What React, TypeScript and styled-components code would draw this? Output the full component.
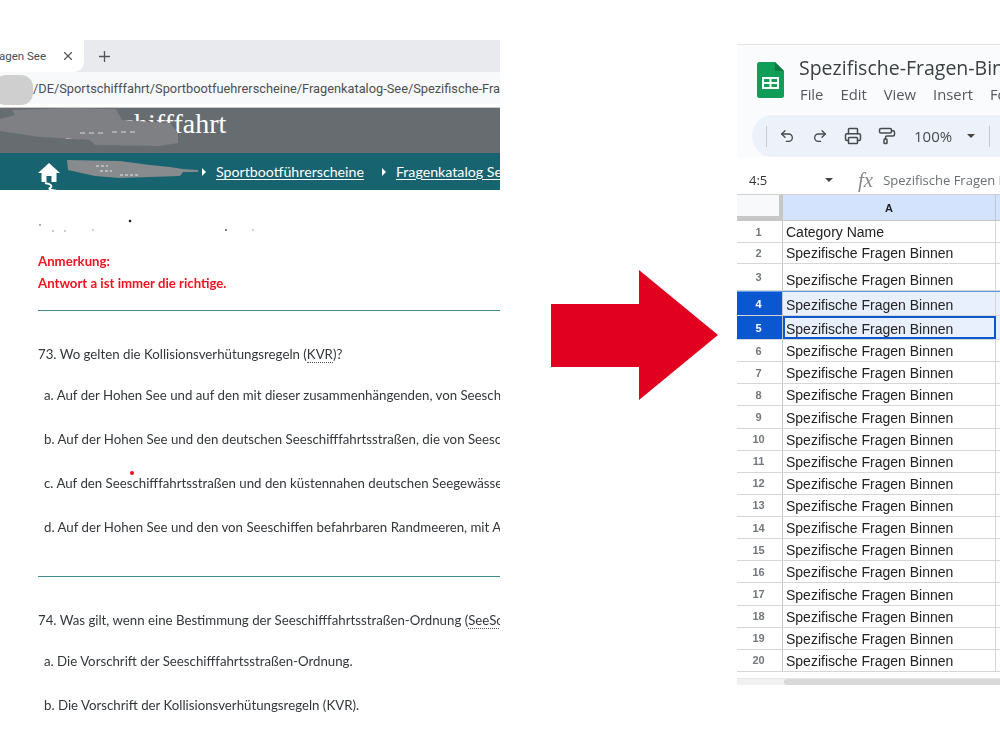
import React from "react";
import styled, { createGlobalStyle } from "styled-components";
import { Undo2, Redo2, Printer, PaintRoller, X, Plus } from "lucide-react";

const GlobalStyle = createGlobalStyle`
  html, body { margin: 0; padding: 0; background: #fff; }
  body { font-family: "Liberation Sans", Arial, sans-serif; }
`;

const Page = styled.div`
  width: 1000px;
  height: 750px;
  overflow: hidden;
  display: grid;
  grid-template-columns: 500px 237px 263px;
  background: #fff;
`;

/* ---------- left: browser with the question catalogue ---------- */

const Browser = styled.div`
  position: relative;
  margin-top: 40px;
  height: 710px;
  overflow: hidden;
  font-family: "Lato", sans-serif;
  filter: blur(0.3px);
`;

const TabStrip = styled.div`
  height: 32px;
  background: #e8eaed;
  display: flex;
  align-items: center;
`;

const Tab = styled.div`
  width: 84px;
  height: 32px;
  flex: none;
  box-sizing: border-box;
  background: #fff;
  border-radius: 0 0 10px 0;
  display: flex;
  align-items: center;
  justify-content: flex-end;
  gap: 15px;
  padding-right: 9px;
  overflow: hidden;
  font-family: "Roboto", sans-serif;
  font-size: 11.5px;
  color: #4a4d52;
  white-space: nowrap;
`;

const TabClose = styled.span`
  display: flex;
  flex: none;
  width: 14px;
  justify-content: center;
`;

const NewTab = styled.div`
  margin-left: 12px;
  display: flex;
  color: #4f5357;
`;

const AddressBar = styled.div`
  height: 35px;
  box-sizing: border-box;
  padding: 3px 0 0 33px;
  background: #f8f9fa;
  border-bottom: 3px solid #fff;
  font-family: "Roboto", sans-serif;
  font-size: 12.8px;
  line-height: 28px;
  color: #4b4f54;
  white-space: nowrap;
  overflow: hidden;
`;

const Blot = styled.div`
  position: absolute;
  left: -6px;
  top: 35px;
  width: 39px;
  height: 30px;
  border-radius: 12px;
  background: #cfcfcf;
`;

const SiteHead = styled.div`
  height: 46px;
  background: #666c70;
  border-top: 1px solid #c8c8c8;
  box-sizing: border-box;
  padding-left: 50px;
  font-family: "Liberation Serif", serif;
  font-size: 28px;
  line-height: 32px;
  color: #fff;
  white-space: nowrap;
`;

const Smear = styled.svg`
  position: absolute;
  left: 0;
  top: 67px;
  width: 500px;
  height: 84px;
  pointer-events: none;
`;

const Crumbs = styled.div`
  height: 37px;
  background: #17636f;
  display: flex;
  align-items: center;
  padding-left: 202px;
  font-size: 14.2px;
  color: #fff;
  white-space: nowrap;
  overflow: hidden;
`;

const Crumb = styled.span`
  margin-left: 10px;
  margin-right: 18px;
  text-decoration: underline;
  text-underline-offset: 2px;
`;

const CrumbArrow = styled.span`
  width: 0;
  height: 0;
  flex: none;
  border-left: 4px solid #fff;
  border-top: 4px solid transparent;
  border-bottom: 4px solid transparent;
`;

const HomeIcon = styled.svg`
  position: absolute;
  left: 37px;
  top: 122px;
`;

const Article = styled.div`
  padding-left: 38px;
  white-space: nowrap;
  overflow: hidden;
  font-size: 13.25px;
  line-height: 22px;
  color: #33373b;
`;

const Specks = styled.svg`
  display: block;
  margin-top: 28px;
`;

const Note = styled.div<{ $top?: number }>`
  margin-top: ${(p) => p.$top ?? 0}px;
  font-weight: 700;
  color: #f5121f;
  font-size: 13.2px;
`;

const Rule = styled.div<{ $top: number }>`
  height: 1px;
  background: #3f8c92;
  margin-top: ${(p) => p.$top}px;
`;

const Question = styled.div<{ $top: number }>`
  margin-top: ${(p) => p.$top}px;
`;

const Answer = styled.div<{ $top: number }>`
  margin-top: ${(p) => p.$top}px;
  padding-left: 6px;
`;

const Abbr = styled.span`
  border-bottom: 1px dotted #555;
`;

const RedDot = styled.span`
  position: absolute;
  left: 130px;
  top: 431px;
  width: 4px;
  height: 4px;
  border-radius: 50%;
  background: #f01020;
`;

/* ---------- middle: arrow ---------- */

const ArrowCell = styled.div`
  padding: 270px 0 0 51px;
`;

/* ---------- right: spreadsheet ---------- */

const Sheet = styled.div`
  margin-top: 44px;
  height: 641px;
  overflow: hidden;
  background: #f9fbfd;
  border-top: 1px solid #e4e4e4;
  box-sizing: border-box;
  filter: blur(0.3px);
`;

const TitleBar = styled.div`
  height: 70px;
  display: flex;
  gap: 15px;
  padding: 17px 0 0 20px;
  box-sizing: border-box;
  white-space: nowrap;
`;

const TitleText = styled.div`
  font-family: "Open Sans", sans-serif;
  font-size: 19.5px;
  line-height: 24px;
  color: #3c4043;
  margin-top: -6px;
`;

const Menu = styled.div`
  display: flex;
  gap: 17px;
  margin-top: 4px;
  padding-left: 1px;
  font-family: "Open Sans", sans-serif;
  font-size: 14.8px;
  line-height: 20px;
  color: #54585d;
`;

const Toolbar = styled.div`
  height: 42px;
  margin-left: 15px;
  border-radius: 21px 0 0 21px;
  background: #edf2fa;
  display: flex;
  align-items: center;
  color: #474a4d;
  white-space: nowrap;
`;

const ToolDivider = styled.span<{ $left: number }>`
  width: 1px;
  height: 21px;
  flex: none;
  background: #c7c9cc;
  margin-left: ${(p) => p.$left}px;
`;

const ToolIcon = styled.span<{ $left: number }>`
  display: flex;
  flex: none;
  margin-left: ${(p) => p.$left}px;
`;

const Zoom = styled.span`
  margin-left: 18px;
  font-family: "Open Sans", sans-serif;
  font-size: 15px;
`;

const Caret = styled.span<{ $left: number }>`
  width: 0;
  height: 0;
  flex: none;
  margin-left: ${(p) => p.$left}px;
  border-top: 4px solid #444;
  border-left: 4px solid transparent;
  border-right: 4px solid transparent;
`;

const FormulaBar = styled.div`
  height: 38px;
  box-sizing: border-box;
  padding: 8px 0 0 12px;
  display: flex;
  align-items: center;
  white-space: nowrap;
  background: #fff;
  color: #444;
  font-size: 13px;
  border-bottom: 1px solid #d0d0d0;
`;

const NameBox = styled.span`
  width: 76px;
  flex: none;
  font-family: "Open Sans", sans-serif;
  font-size: 13px;
  color: #333;
`;

const FormulaDivider = styled.span`
  width: 1px;
  height: 18px;
  margin-left: 14px;
  background: #d5d5d5;
`;

const Fx = styled.span`
  margin-left: 11px;
  font-family: "Liberation Serif", serif;
  font-style: italic;
  font-size: 21px;
  line-height: 20px;
  color: #8a8a8a;
`;

const FormulaText = styled.span`
  margin-left: 10px;
  font-family: "Open Sans", sans-serif;
  color: #6b6f73;
`;

const GridRow = styled.div<{ $h: number; $picked?: boolean; $edge?: boolean }>`
  height: ${(p) => p.$h}px;
  box-sizing: border-box;
  display: grid;
  grid-template-columns: 46px 213px 1fr;
  background: ${(p) => (p.$picked ? "#e8f0fe" : "#fff")};
  border-bottom: 1px solid #d6d6d6;
  ${(p) => (p.$edge ? "border-top: 1px solid #5b97ea;" : "")}
`;

const ColHead = styled.div`
  height: 26px;
  display: grid;
  grid-template-columns: 46px 213px 1fr;
  background: #d3e3fd;
  border-bottom: 1px solid #c4c7c5;
  box-sizing: border-box;
  font-size: 11px;
  font-weight: 700;
  color: #1f1f1f;
`;

const Corner = styled.div`
  background: #f8f9fa;
  border-right: 4px solid #c7c7c7;
  border-bottom: 4px solid #c7c7c7;
`;

const ColA = styled.div`
  display: flex;
  align-items: center;
  justify-content: center;
  border-right: 1px solid #c4c7c5;
`;

const RowNum = styled.div<{ $picked?: boolean }>`
  display: flex;
  align-items: center;
  justify-content: center;
  padding-right: 2px;
  font-size: 11px;
  font-weight: 700;
  color: ${(p) => (p.$picked ? "#fff" : "#74787c")};
  background: ${(p) => (p.$picked ? "#0b57d0" : "transparent")};
  border-right: 1px solid #c4c7c5;
`;

const Cell = styled.div<{ $active?: boolean }>`
  display: flex;
  align-items: flex-end;
  padding: 0 0 1px 3px;
  font-size: 14px;
  line-height: 18px;
  color: #222;
  white-space: nowrap;
  border-right: 1px solid #d6d6d6;
  ${(p) => (p.$active ? "outline: 2px solid #0b57d0; outline-offset: -2px;" : "")}
`;

const Blank = styled.div`
  height: 6px;
  background: #fff;
  border-bottom: 1px solid #e6e6e6;
`;

const ScrollTrack = styled.div`
  height: 6px;
  background: #f1f1f1;
  padding-left: 47px;
`;

const ScrollThumb = styled.div`
  height: 6px;
  border-radius: 3px 0 0 3px;
  background: #d9d9d9;
`;

const heights = [
  22, 21, 27, 25, 24,
  ...Array.from({ length: 15 }, () => 22.14),
];

const SheetsLogo = () => (
  <svg width="27" height="36" viewBox="0 0 27 36" style={{ flex: "none" }}>
    <path d="M2.5 0H18l9 9v24.5a2.5 2.5 0 0 1-2.5 2.5h-22A2.5 2.5 0 0 1 0 33.500V2.500A2.500 2.500 0 0 1 2.500 0z" fill="#0f9d58" />
    <path d="M18 0l9 9h-9z" fill="#0a7a43" />
    <path d="M5 15h17v12H5z M7 17v3h5.500v-3z M14.500 17v3H20v-3z M7 22v3h5.500v-3z M14.500 22v3H20v-3z" fill="#fff" fillRule="evenodd" />
  </svg>
);

export default function App() {
  return (
    <Page>
      <GlobalStyle />
      <Browser>
        <TabStrip>
          <Tab>
            <span>agen See</span>
            <TabClose>
              <X size={14} strokeWidth={2} color="#555" />
            </TabClose>
          </Tab>
          <NewTab>
            <Plus size={17} strokeWidth={1.8} />
          </NewTab>
        </TabStrip>
        <AddressBar>/DE/Sportschifffahrt/Sportbootfuehrerscheine/Fragenkatalog-See/Spezifische-Fragen</AddressBar>
        <Blot />
        <SiteHead>Sportschifffahrt</SiteHead>
        <Crumbs>
          <CrumbArrow />
          <Crumb>Sportbootführerscheine</Crumb>
          <CrumbArrow />
          <Crumb>Fragenkatalog See</Crumb>
        </Crumbs>
        {/* hand-drawn scribbles that hide part of the header and the breadcrumb */}
        <Smear viewBox="0 0 500 84">
          <path d="M12 3 L70 1 L116 2 L122 13 L170 16 L178 26 L178 36 L160 39 L95 38 L90 33 L40 30 L0 24 L0 12 L15 8 Z" fill="#7e8083" />
          <path d="M80 26 H104 M112 25 H136" stroke="#d8d8d8" strokeWidth="1" strokeDasharray="5 4" />
          <path d="M67 53 L120 54 L150 58 L170 60 L183 62 L198 63 L198 65 L183 65 L180 69 L120 71 L95 69 L68 63 Z" fill="#888b8e" />
          <path d="M96 59 H108 M100 64 H112 M120 68 H140" stroke="#e8e8e8" strokeWidth="1" strokeDasharray="3 2" />
        </Smear>
        <HomeIcon width="24" height="30" viewBox="0 0 24 30">
          <path d="M12 1 L23 11 H19.500 V20 H14.500 V14 H9.500 V20 H4.500 V11 H1 Z" fill="#fff" />
          <path d="M8 21 C14 22 16 24 13 26 C11 27 14 28 20 29" fill="none" stroke="#fff" strokeWidth="2" />
        </HomeIcon>
        <Article>
          <Specks width="280" height="18">
            <circle cx="2" cy="7" r="1" fill="#999" />
            <circle cx="92" cy="3" r="1.300" fill="#222" />
            <circle cx="55" cy="12" r="0.800" fill="#999" />
            <circle cx="15" cy="13" r="0.800" fill="#888" />
            <circle cx="27" cy="13" r="0.800" fill="#888" />
            <circle cx="188" cy="12" r="1" fill="#555" />
            <circle cx="215" cy="12" r="0.800" fill="#999" />
          </Specks>
          <Note $top={14}>Anmerkung:</Note>
          <Note>Antwort a ist immer die richtige.</Note>
          <Rule $top={16} />
          <Question $top={32}>
            73. Wo gelten die Kollisionsverhütungsregeln (<Abbr>KVR</Abbr>)?
          </Question>
          <Answer $top={19}>a. Auf der Hohen See und auf den mit dieser zusammenhängenden, von Seeschiffen</Answer>
          <Answer $top={22}>b. Auf der Hohen See und den deutschen Seeschifffahrtsstraßen, die von Seeschiffen</Answer>
          <Answer $top={22}>c. Auf den Seeschifffahrtsstraßen und den küstennahen deutschen Seegewässern</Answer>
          <Answer $top={22}>d. Auf der Hohen See und den von Seeschiffen befahrbaren Randmeeren, mit Ausnahme</Answer>
          <Rule $top={38} />
          <Question $top={32}>
            74. Was gilt, wenn eine Bestimmung der Seeschifffahrtsstraßen-Ordnung (<Abbr>SeeSchStrO</Abbr>)
          </Question>
          <Answer $top={19}>a. Die Vorschrift der Seeschifffahrtsstraßen-Ordnung.</Answer>
          <Answer $top={22}>b. Die Vorschrift der Kollisionsverhütungsregeln (KVR).</Answer>
        </Article>
        <RedDot />
      </Browser>

      <ArrowCell>
        <svg width="167" height="130" viewBox="0 0 167 130">
          <path d="M0 34 H88 V0 L167 65 L88 130 V97 H0 Z" fill="#e10020" />
        </svg>
      </ArrowCell>

      <Sheet>
        <TitleBar>
          <SheetsLogo />
          <div>
            <TitleText>Spezifische-Fragen-Binnen</TitleText>
            <Menu>
              <span>File</span>
              <span>Edit</span>
              <span>View</span>
              <span>Insert</span>
              <span>Format</span>
            </Menu>
          </div>
        </TitleBar>
        <Toolbar>
          <ToolDivider $left={14} />
          <ToolIcon $left={12}><Undo2 size={16} strokeWidth={2} /></ToolIcon>
          <ToolIcon $left={17}><Redo2 size={16} strokeWidth={2} /></ToolIcon>
          <ToolIcon $left={16}><Printer size={18} strokeWidth={2} /></ToolIcon>
          <ToolIcon $left={16}><PaintRoller size={18} strokeWidth={2} /></ToolIcon>
          <Zoom>100%</Zoom>
          <Caret $left={15} />
          <ToolDivider $left={14} />
        </Toolbar>
        <FormulaBar>
          <NameBox>4:5</NameBox>
          <Caret $left={0} />
          <FormulaDivider />
          <Fx>fx</Fx>
          <FormulaText>Spezifische Fragen Binnen</FormulaText>
        </FormulaBar>
        <ColHead>
          <Corner />
          <ColA>A</ColA>
          <div />
        </ColHead>
        {heights.map((h, i) => {
          const n = i + 1;
          const picked = n === 4 || n === 5;
          return (
            <GridRow key={n} $h={h} $picked={picked} $edge={n === 4}>
              <RowNum $picked={picked}>{n}</RowNum>
              <Cell $active={n === 5}>{n === 1 ? "Category Name" : "Spezifische Fragen Binnen"}</Cell>
              <div />
            </GridRow>
          );
        })}
        <Blank />
        <ScrollTrack>
          <ScrollThumb />
        </ScrollTrack>
      </Sheet>
    </Page>
  );
}
